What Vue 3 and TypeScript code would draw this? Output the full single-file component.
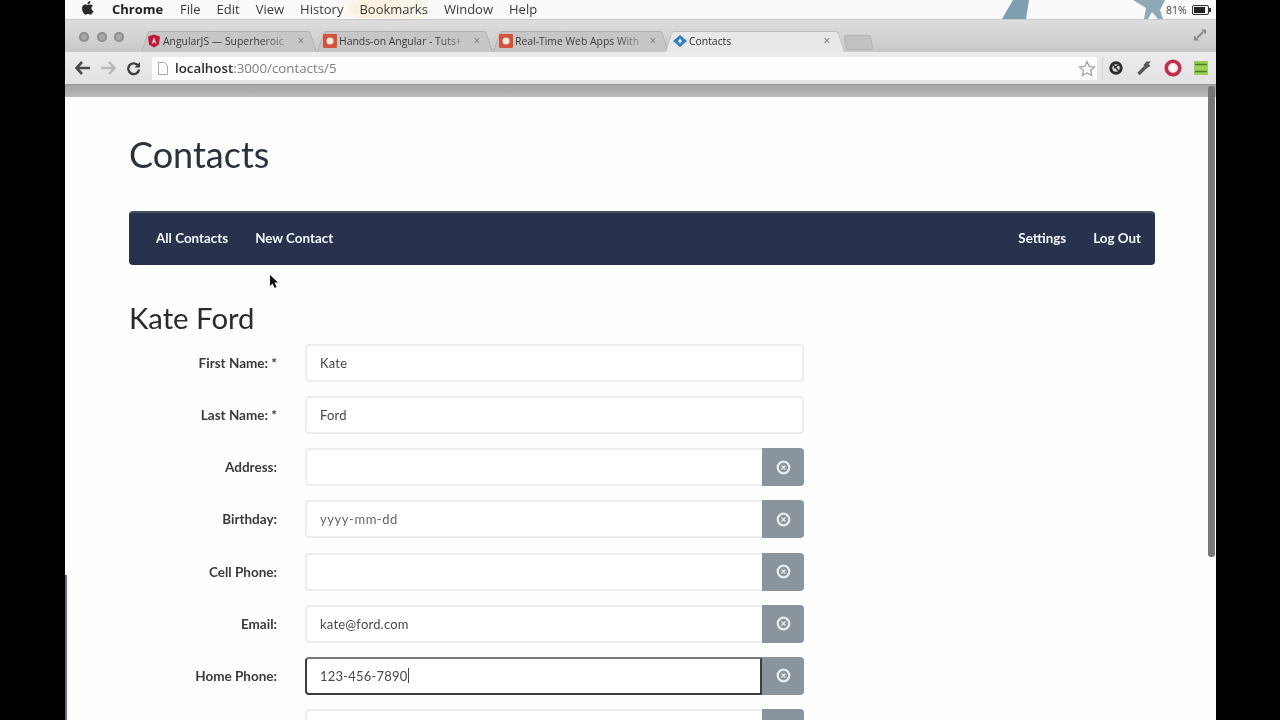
<script setup lang="ts">
interface Field { label: string; value: string; clear: boolean; focus?: boolean; placeholder?: string }
const menus: string[] = ['File', 'Edit', 'View', 'History', 'Bookmarks', 'Window', 'Help']
const tabs = [
  { title: 'AngularJS — Superheroic', icon: 'ng' },
  { title: 'Hands-on Angular - Tuts+', icon: 'tuts' },
  { title: 'Real-Time Web Apps With', icon: 'tuts' }
]
const fields: Field[] = [
  { label: 'First Name: *', value: 'Kate', clear: false },
  { label: 'Last Name: *', value: 'Ford', clear: false },
  { label: 'Address:', value: '', clear: true },
  { label: 'Birthday:', value: '', placeholder: 'yyyy-mm-dd', clear: true },
  { label: 'Cell Phone:', value: '', clear: true },
  { label: 'Email:', value: 'kate@ford.com', clear: true },
  { label: 'Home Phone:', value: '123-456-7890', clear: true, focus: true },
  { label: '', value: '', clear: true }
]
</script>

<template>
  <div class="stage">
    <div class="screen">
      <div class="menubar">
        <svg class="apple" width="14" height="16" viewBox="0 0 14 16">
          <path d="M10.4 8.4c0-1.700 1.400-2.500 1.500-2.600-.8-1.200-2.100-1.300-2.500-1.400-1.100-.1-2.100.6-2.600.6-.6 0-1.400-.6-2.300-.6C3.300 4.400 2.200 5.100 1.600 6.100.4 8.200 1.300 11.300 2.500 13c.6.800 1.300 1.800 2.200 1.700.9 0 1.200-.6 2.300-.6s1.400.6 2.300.6c1 0 1.600-.8 2.200-1.700.7-1 1-1.900 1-2-.1 0-2.100-.8-2.100-2.600zM8.700 3.300c.5-.6.800-1.400.7-2.300-.7 0-1.600.5-2.100 1.100-.5.500-.9 1.400-.8 2.200.8.100 1.700-.4 2.200-1z" fill="#2a2a2a"/>
        </svg>
        <span class="app-name">Chrome</span>
        <span v-for="m in menus" :key="m" class="menu" :class="{ glow: m === 'Bookmarks' }">{{ m }}</span>
        <span class="status">
          <span class="pct">81%</span>
          <svg width="20" height="10" viewBox="0 0 20 10"><rect x="0.500" y="0.500" width="16" height="9" rx="1.500" fill="#f2f2f2" stroke="#333"/><rect x="2" y="2" width="11" height="6" fill="#222"/><rect x="17" y="3" width="2" height="4" fill="#333"/></svg>
        </span>
        <svg class="wallpaper" width="220" height="19" viewBox="0 0 220 19">
          <path d="M2 19 L13 0 H29 L26 19 Z" fill="#7e9fb0"/>
          <path d="M133 0 H165 L160 10 L163 19 H158 L152 12 L148 19 H144 L146 8 Z" fill="#8fa9b6"/>
        </svg>
      </div>

      <div class="tabstrip">
        <div class="lights"><i></i><i></i><i></i></div>
        <div class="tabs">
          <div v-for="t in tabs" :key="t.title" class="tab">
            <svg v-if="t.icon === 'ng'" class="fav" width="14" height="14" viewBox="0 0 14 14"><path d="M7 0.500 13 2.500 12 10.500 7 13.500 2 10.500 1 2.500Z" fill="#c4163a"/><path d="M7 3 4.700 9.500H5.900L6.400 8.200H7.600L8.100 9.500H9.300Z" fill="#f3d4da"/></svg>
            <svg v-else class="fav" width="14" height="14" viewBox="0 0 14 14"><rect width="14" height="14" rx="1" fill="#d4523a"/><circle cx="7" cy="7" r="3.600" fill="#f8e6d8"/></svg>
            <span class="tab-title">{{ t.title }}</span>
            <span class="tab-x">×</span>
          </div>
          <div class="tab active">
            <svg class="fav" width="14" height="12" viewBox="0 0 14 12"><path d="M7 0 14 6 7 12 0 6Z" fill="#2f7fc4"/><path d="M5 6 7 3.500 9 6 7 8.500Z" fill="#e5f0fa"/></svg>
            <span class="tab-title">Contacts</span>
            <span class="tab-x">×</span>
          </div>
          <div class="newtab"></div>
        </div>
        <svg class="expand" width="14" height="14" viewBox="0 0 14 14"><path d="M8 1.500H13V6.500ZM1 7.500 6 12.500H1Z" fill="#8a8a8a"/><path d="M10 4 4 10" stroke="#8a8a8a" stroke-width="1.800"/></svg>
      </div>

      <div class="toolbar">
        <svg class="nav-ic back" width="16" height="14" viewBox="0 0 16 14"><path d="M7 1 1.500 7 7 13M2 7H15" fill="none" stroke="#4a4a4a" stroke-width="2.600"/></svg>
        <svg class="nav-ic fwd" width="16" height="14" viewBox="0 0 16 14"><path d="M9 1 14.500 7 9 13M14 7H1" fill="none" stroke="#b8b8b8" stroke-width="2.400"/></svg>
        <svg class="nav-ic reload" width="15" height="15" viewBox="0 0 15 15"><path d="M12.300 5A5.400 5.400 0 1 0 13 8.500" fill="none" stroke="#3f3f3f" stroke-width="2.300"/><path d="M14 1V6.500H8.500Z" fill="#3f3f3f"/></svg>
        <div class="urlbar">
          <svg width="10" height="13" viewBox="0 0 10 13"><path d="M.5.500H6.500L9.500 3.500V12.500H.5Z" fill="#fff" stroke="#a8a8a8"/></svg>
          <span class="url"><b>localhost</b>:3000/contacts/5</span>
          <svg class="star" width="18" height="17" viewBox="0 0 18 17"><path d="M9 1.500 11.200 6.300 16.500 6.900 12.600 10.400 13.700 15.600 9 13 4.300 15.600 5.400 10.400 1.500 6.900 6.800 6.300Z" fill="#fbfbfb" stroke="#a5a5a5" stroke-width="1.300"/></svg>
        </div>
        <div class="exts">
          <svg width="16" height="16" viewBox="0 0 16 16"><circle cx="8" cy="8" r="5.200" fill="#d8d8d8" stroke="#2d2d2d" stroke-width="3"/><path d="M5 4.500 11 11.500M11 4.500 6 8" stroke="#2d2d2d" stroke-width="1.300"/></svg>
          <svg width="16" height="16" viewBox="0 0 16 16"><path d="M2.500 14 9 7.500" stroke="#555" stroke-width="3.400"/><path d="M7.500 5 10.500 1.500 15 1.500 12.500 4 14.500 6 9.500 9Z" fill="#555"/></svg>
          <svg width="18" height="18" viewBox="0 0 18 18"><circle cx="9" cy="9" r="6.800" fill="#f2e6e8" stroke="#c52b4b" stroke-width="3.600"/><rect x="6.500" y="5.500" width="5" height="7" rx="1.500" fill="#fff"/></svg>
          <svg width="14" height="14" viewBox="0 0 14 14"><rect width="14" height="14" fill="#9ccf55"/><path d="M1 3.500H13M1 10.500H13" stroke="#4e7d1f" stroke-width="1.600"/></svg>
        </div>
      </div>

      <div class="band"></div>

      <main class="page">
        <h1>Contacts</h1>
        <nav class="navbar">
          <a>All Contacts</a>
          <a>New Contact</a>
          <span class="spacer"></span>
          <a>Settings</a>
          <a>Log Out</a>
        </nav>
        <h2>Kate Ford</h2>
        <form class="form">
          <div v-for="(f, i) in fields" :key="i" class="row">
            <label>{{ f.label }}</label>
            <div class="group">
              <div class="input" :class="{ focus: f.focus, joined: f.clear, ph: f.placeholder }">{{ f.value || f.placeholder }}<i v-if="f.focus" class="caret"></i></div>
              <button v-if="f.clear" type="button" class="clear">
                <svg width="15" height="15" viewBox="0 0 15 15"><circle cx="7.500" cy="7.500" r="5.800" fill="none" stroke="#e8ecee" stroke-width="2.200"/><path d="M5.500 5.500 9.500 9.500M9.500 5.500 5.500 9.500" stroke="#e8ecee" stroke-width="1.300"/></svg>
              </button>
            </div>
          </div>
        </form>
      </main>

      <div class="scrollbar"></div>
      <div class="edge"></div>
      <svg class="cursor" width="10" height="15" viewBox="0 0 10 15"><path d="M1 1V12L3.500 9.500 5.500 14 7.500 13 5.500 8.500H9Z" fill="#111"/></svg>
    </div>
  </div>
</template>

<style>
html, body { margin: 0; background: #000; overflow: hidden; }
</style>

<style scoped>
.stage { width: 1280px; height: 720px; background: #000; display: flex; padding-left: 65px; padding-right: 64px; box-sizing: border-box; overflow: hidden; }
.screen { position: relative; flex: 1; height: 720px; overflow: hidden; background: #fefefe; filter: blur(0.65px); font-family: Lato, "Open Sans", sans-serif; display: flex; flex-direction: column; }

.menubar { position: relative; height: 19px; flex: none; box-sizing: border-box; padding-bottom: 2px; background: #fafafa; display: flex; align-items: center; font-family: "Open Sans", sans-serif; font-size: 13px; color: #333; padding-left: 16px; }
.apple { margin-right: 17px; margin-top: -1px; }
.app-name { font-weight: 700; width: 51px; margin-right: 17px; font-size: 13px; color: #222; }
.menu { margin-right: 16px; color: #3a3a3a; }
.menu.glow { background: linear-gradient(90deg, #fdf1dc, #f8f6ee); box-shadow: -14px 0 10px -4px #fbe8cc; }
.status { position: absolute; left: 1101px; top: 0; height: 19px; display: flex; align-items: center; gap: 5px; font-size: 10.500px; color: #444; }
.wallpaper { position: absolute; left: 935px; top: 0; }

.tabstrip { height: 33px; flex: none; position: relative; background: linear-gradient(#dedede, #d2d2d2 55%, #c8c8c8); border-top: 1px solid #c8c8c8; box-sizing: border-box; display: flex; align-items: flex-end; }
.lights { display: flex; gap: 7.500px; width: 62px; flex: none; align-self: center; padding-left: 14px; margin-top: 2px; }
.lights i { width: 10px; height: 10px; flex: none; border-radius: 50%; background: #a8a8a8; box-shadow: inset 0 0 0 2px #8f8f8f; }
.tabs { display: flex; align-items: flex-end; height: 21px; }
.tab { width: 176px; height: 21px; flex: none; position: relative; isolation: isolate; display: flex; align-items: center; box-sizing: border-box; padding: 0 11px 2px 6px; font-size: 10.400px; color: #3c3c3c; font-family: "Open Sans", sans-serif; }
.tab::before, .tab::after { content: ""; position: absolute; z-index: -1; top: 0; bottom: 0; width: 55%; background: #c6c6c6; border-top: 1px solid #aeaeae; box-sizing: border-box; transform-origin: bottom; }
.tab::before { left: 0; border-left: 1px solid #aeaeae; border-top-left-radius: 3px; transform: skewX(-18deg); }
.tab::after { right: 0; border-right: 1px solid #aeaeae; border-top-right-radius: 3px; transform: skewX(18deg); }
.tab.active { width: 180px; margin-left: -4px; padding: 0 13px 2px 8px; color: #333; z-index: 2; }
.tab.active::before, .tab.active::after { background: #e8e8e8; border-color: #bdbdbd; }
.fav { flex: none; margin-right: 2px; }
.tab-title { flex: 1; min-width: 0; white-space: nowrap; -webkit-mask-image: linear-gradient(90deg, #000 75%, rgba(0,0,0,.15)); mask-image: linear-gradient(90deg, #000 75%, rgba(0,0,0,.15)); }
.tab-x { color: #777; font-size: 12px; width: 10px; flex: none; text-align: center; }
.newtab { width: 27px; height: 15px; margin-bottom: 2px; background: #c2c2c2; border: 1px solid #b0b0b0; border-radius: 3px; transform: skewX(10deg); box-sizing: border-box; }
.expand { position: absolute; left: 1128px; top: 8px; }

.toolbar { height: 32px; flex: none; background: linear-gradient(#ececec, #e2e2e2); display: flex; align-items: center; position: relative; }
.nav-ic { flex: none; }
.back { margin-left: 10px; }
.fwd { margin-left: 9px; }
.reload { margin-left: 10px; }
.urlbar { width: 945px; height: 23px; margin-left: 11px; background: #fdfdfd; display: flex; align-items: center; box-sizing: border-box; padding-left: 6px; flex: none; }
.url { font-family: "Open Sans", sans-serif; font-size: 13.300px; color: #808080; margin-left: 7px; flex: 1; }
.url b { font-weight: 600; color: #2c2c2c; }
.star { margin-right: 1px; }
.exts { display: flex; align-items: center; margin-left: 5px; border-left: 1px solid #d4d4d4; height: 23px; padding-left: 5px; gap: 12px; }

.band { height: 13px; flex: none; background: linear-gradient(#949494 0, #a8a8a8 15%, #aeaeae 60%, #bdbdbd 100%); }

.page { flex: 1; padding: 0 61px 0 64px; color: #2c3e50; display: flex; flex-direction: column; }
h1 { margin: 34px 0 0; font-size: 36px; line-height: 46px; font-weight: 400; color: #2a333d; }
.navbar { margin-top: 34px; height: 54px; flex: none; box-sizing: border-box; background: #28324c; border-radius: 4px; border-top: 2px solid #4a5164; display: flex; align-items: center; padding: 0 14px 3px 27px; gap: 27px; font-size: 13.400px; font-weight: 700; color: #f4f6fb; }
.spacer { flex: 1; }
h2 { margin: 35px 0 0; font-size: 29.300px; line-height: 36px; font-weight: 400; color: #2b2b2b; }
.form { margin-top: 8px; display: flex; flex-direction: column; gap: 14.170px; }
.row { display: flex; align-items: center; height: 38px; flex: none; }
label { width: 148px; text-align: right; font-size: 13.500px; font-weight: 700; color: #3a3a3a; flex: none; }
.group { display: flex; margin-left: 28px; width: 499px; height: 38px; flex: none; }
.input { flex: 1; height: 38px; box-sizing: border-box; border: 2px solid #ededed; border-radius: 4px; padding: 0 13px; display: flex; align-items: center; font-size: 13px; letter-spacing: .2px; color: #484848; background: #fff; }
.input.ph { color: #666; letter-spacing: .55px; }
.input.joined { border-radius: 4px 0 0 4px; border-right: 0; }
.input.focus { border: 2px solid #3d3d3d; border-top-color: #777; border-radius: 4px 0 0 4px; }
.caret { width: 1px; height: 15px; background: #444; margin-left: 1px; }
.clear { width: 42px; height: 38px; flex: none; border: 0; padding: 0; background: #8a949c; border-radius: 0 4px 4px 0; display: flex; align-items: center; justify-content: center; }

.scrollbar { position: absolute; left: 1143px; top: 86px; width: 7px; height: 471px; background: #777; border-radius: 3px; }
.edge { position: absolute; left: 0; top: 575px; bottom: 0; width: 2px; background: #5f7383; }
.cursor { position: absolute; left: 204px; top: 274px; }
</style>
